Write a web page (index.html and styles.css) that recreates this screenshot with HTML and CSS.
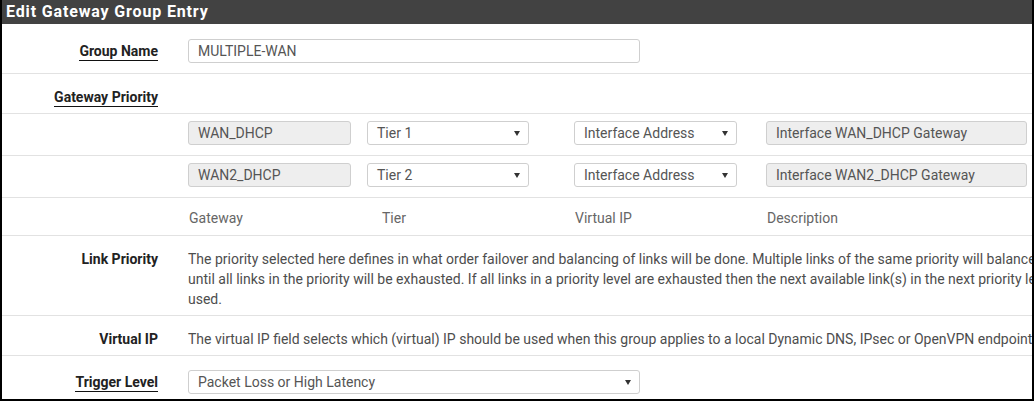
FILE: index.html
```html
<!DOCTYPE html>
<html>
<head>
<meta charset="utf-8">
<title>Edit Gateway Group Entry</title>
<link rel="stylesheet" href="styles.css">
</head>
<body>
<div class="frame">
  <div class="panel-heading">Edit Gateway Group Entry</div>

  <div class="row row-name">
    <div class="label"><span class="req">Group Name</span></div>
    <div class="content">
      <div class="input wide">MULTIPLE-WAN</div>
    </div>
  </div>

  <div class="row row-title">
    <div class="label"><span class="req">Gateway Priority</span></div>
    <div class="content"></div>
  </div>

  <div class="row row-gw">
    <div class="label"></div>
    <div class="content gw-grid">
      <div class="input ro c1">WAN_DHCP</div>
      <div class="input select c2"><span>Tier 1</span><i class="caret"></i></div>
      <div class="input select c3"><span>Interface Address</span><i class="caret"></i></div>
      <div class="input ro c4">Interface WAN_DHCP Gateway</div>
    </div>
  </div>

  <div class="row row-gw">
    <div class="label"></div>
    <div class="content gw-grid">
      <div class="input ro c1">WAN2_DHCP</div>
      <div class="input select c2"><span>Tier 2</span><i class="caret"></i></div>
      <div class="input select c3"><span>Interface Address</span><i class="caret"></i></div>
      <div class="input ro c4">Interface WAN2_DHCP Gateway</div>
    </div>
  </div>

  <div class="row row-heads">
    <div class="label"></div>
    <div class="content gw-grid heads">
      <div class="c1">Gateway</div>
      <div class="c2 tier-head">Tier</div>
      <div class="c3">Virtual IP</div>
      <div class="c4">Description</div>
    </div>
  </div>

  <div class="row row-text row-link">
    <div class="label plain">Link Priority</div>
    <div class="content text">The priority selected here defines in what order failover and balancing of links will be done. Multiple links of the same priority will balance connections<br>until all links in the priority will be exhausted. If all links in a priority level are exhausted then the next available link(s) in the next priority level will be<br>used.</div>
  </div>

  <div class="row row-text row-vip">
    <div class="label plain">Virtual IP</div>
    <div class="content text">The virtual IP field selects which (virtual) IP should be used when this group applies to a local Dynamic DNS, IPsec or OpenVPN endpoint.</div>
  </div>

  <div class="row row-trigger">
    <div class="label"><span class="req">Trigger Level</span></div>
    <div class="content">
      <div class="input select wide"><span>Packet Loss or High Latency</span><i class="caret"></i></div>
    </div>
  </div>
</div>
</body>
</html>
```

FILE: styles.css
```css
* { box-sizing: border-box; }

html, body {
  margin: 0;
  padding: 0;
  background: #ffffff;
  overflow: hidden;
}

body {
  font-family: Roboto, "Liberation Sans", sans-serif;
  font-size: 14px;
  color: #444;
}

.frame {
  width: 1034px;
  height: 401px;
  border-left: 2px solid #000;
  border-right: 2px solid #000;
  border-bottom: 2px solid #000;
  overflow: hidden;
  background: #fff;
}

.panel-heading {
  height: 24px;
  background: #424242;
  color: #fff;
  font-weight: 700;
  font-size: 16px;
  line-height: 23px;
  padding-left: 4px;
  letter-spacing: 0.85px;
  white-space: nowrap;
}

.row {
  display: grid;
  grid-template-columns: 186px 1fr;
  border-bottom: 1px solid #e2e2e2;
}

.label {
  text-align: right;
  padding-right: 30px;
  font-weight: 700;
  color: #222;
  line-height: 20px;
  white-space: nowrap;
}

.req {
  border-bottom: 1.5px solid #111;
  padding-bottom: 1px;
}

.content {
  min-width: 0;
  white-space: nowrap;
}

.row-name { padding: 15px 0 10px; height: 50px; }
.row-name .label { padding-top: 2px; }

.row-title { padding: 13px 0 5px; height: 40px; }

.row-gw { padding: 7px 0 9px; height: 42px; }

.row-heads { padding: 10px 0 5px; height: 38px; }

.row-text { padding: 13px 0 6px; line-height: 20px; }
.row-link { height: 80px; }
.row-vip { height: 40px; }

.row-trigger { padding: 14px 0 0; border-bottom: none; }
.row-trigger .label { padding-top: 2px; }

.text { color: #4d4d4d; }

.input {
  height: 24px;
  border: 1px solid #cfcfcf;
  border-radius: 3px;
  background: #fff;
  color: #555;
  line-height: 22px;
  padding: 0 9px;
  font-size: 14px;
  white-space: nowrap;
  overflow: hidden;
}

.input.wide { width: 452px; }

.input.ro { background: #eeeeee; }

.select {
  display: flex;
  align-items: center;
  justify-content: space-between;
  padding-right: 8px;
}

.caret {
  display: block;
  width: 0;
  height: 0;
  border-left: 3px solid transparent;
  border-right: 3px solid transparent;
  border-top: 5px solid #333;
}

.gw-grid {
  display: grid;
  grid-template-columns: 179px 207px 192px 260px;
}

.gw-grid .c1 { width: 163px; }
.gw-grid .c2 { width: 162px; }
.gw-grid .c3 { width: 163px; }
.gw-grid .c4 { width: 261px; }

.heads {
  color: #666;
  line-height: 20px;
}

.heads > div {
  padding-left: 1px;
}

.heads .tier-head { padding-left: 15px; }
```
